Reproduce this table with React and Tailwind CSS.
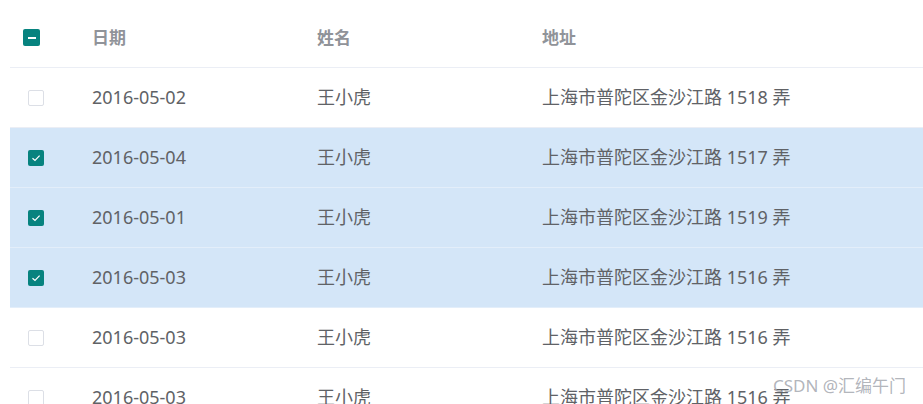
import React from 'react';

const rows = [
  { date: '2016-05-02', name: '王小虎', address: '上海市普陀区金沙江路 1518 弄', checked: false },
  { date: '2016-05-04', name: '王小虎', address: '上海市普陀区金沙江路 1517 弄', checked: true },
  { date: '2016-05-01', name: '王小虎', address: '上海市普陀区金沙江路 1519 弄', checked: true },
  { date: '2016-05-03', name: '王小虎', address: '上海市普陀区金沙江路 1516 弄', checked: true },
  { date: '2016-05-03', name: '王小虎', address: '上海市普陀区金沙江路 1516 弄', checked: false },
  { date: '2016-05-03', name: '王小虎', address: '上海市普陀区金沙江路 1516 弄', checked: false },
];

const Checkbox = ({ checked }) =>
  checked ? (
    <span className="flex h-4 w-4 items-center justify-center rounded-[2px] bg-[#07837f]">
      <svg width="10" height="8" viewBox="0 0 10 8" fill="none">
        <path d="M1.5 4.2 L4 6.4 L8.6 1.6" stroke="#fff" strokeWidth="1.2" />
      </svg>
    </span>
  ) : (
    <span className="block h-4 w-4 rounded-[2px] border border-[#dcdfe6] bg-white" />
  );

const App = () => {
  return (
    <div
      className="relative h-[404px] w-[923px] overflow-hidden bg-white pl-[10px]"
      style={{ fontFamily: '"Noto Sans", "Noto Sans CJK SC", sans-serif' }}
    >
      <div className="pt-2">
        <div className="grid h-[60px] grid-cols-[82px_225px_225px_1fr] items-center border-b border-[#ebeef5] text-[17px] font-bold text-[#909399]">
          <div className="pl-[13px]">
            <span className="flex h-[17px] w-[17px] items-center justify-center rounded-[2px] bg-[#07837f]">
              <span className="block h-[2px] w-[8px] bg-white" />
            </span>
          </div>
          <div>日期</div>
          <div>姓名</div>
          <div>地址</div>
        </div>

        {rows.map((row, idx) => (
          <div
            key={idx}
            className={`grid h-[60px] grid-cols-[82px_225px_225px_1fr] items-center border-b text-[18px] text-[#606266] ${
              row.checked ? 'border-[#e3eefa] bg-[#d4e6f8]' : 'border-[#ebeef5] bg-white'
            }`}
          >
            <div className="pl-[18px]">
              <Checkbox checked={row.checked} />
            </div>
            <div>{row.date}</div>
            <div>{row.name}</div>
            <div>{row.address}</div>
          </div>
        ))}
      </div>

      <div className="absolute left-[773px] top-[373px] text-[17px] text-[#a9acb3]/90">CSDN @汇编午门</div>
    </div>
  );
};

export default App;
